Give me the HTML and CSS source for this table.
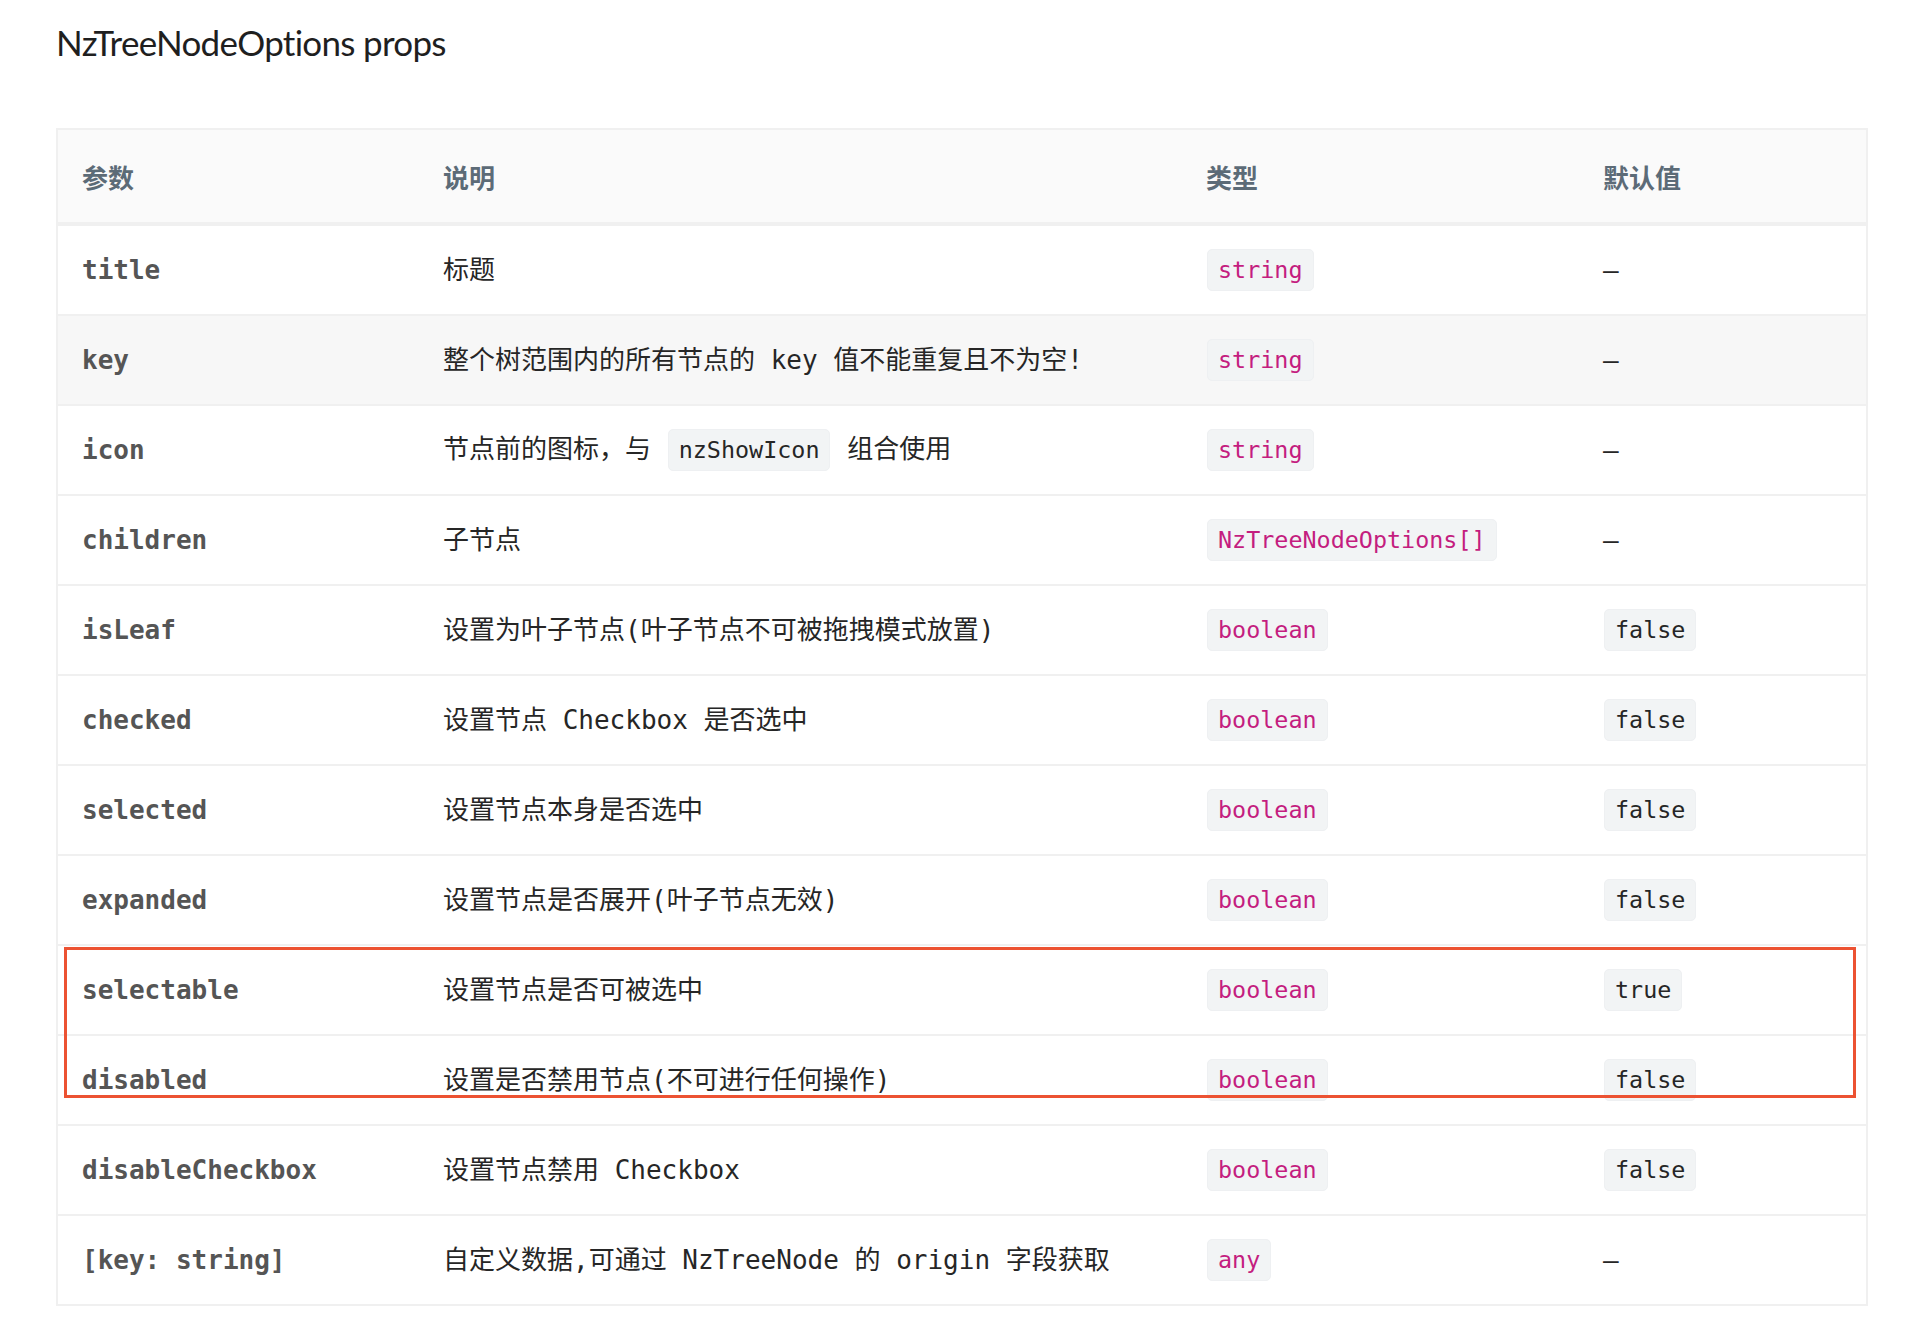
FILE: index.html
```html
<!DOCTYPE html>
<html lang="zh-CN">
<head>
<meta charset="utf-8">
<title>NzTreeNodeOptions props</title>
<link rel="stylesheet" href="styles.css">
</head>
<body>
<main class="page">
  <h3 class="title">NzTreeNodeOptions props</h3>
  <div class="table-wrap">
    <table class="api">
      <colgroup>
        <col class="c1"><col class="c2"><col class="c3"><col class="c4">
      </colgroup>
      <thead>
        <tr><th>参数</th><th>说明</th><th>类型</th><th>默认值</th></tr>
      </thead>
      <tbody>
        <tr><td>title</td><td>标题</td><td><code>string</code></td><td>–</td></tr>
        <tr class="hover"><td>key</td><td>整个树范围内的所有节点的 key 值不能重复且不为空!</td><td><code>string</code></td><td>–</td></tr>
        <tr><td>icon</td><td>节点前的图标，与 <code>nzShowIcon</code> 组合使用</td><td><code>string</code></td><td>–</td></tr>
        <tr><td>children</td><td>子节点</td><td><code>NzTreeNodeOptions[]</code></td><td>–</td></tr>
        <tr><td>isLeaf</td><td>设置为叶子节点(叶子节点不可被拖拽模式放置)</td><td><code>boolean</code></td><td><code>false</code></td></tr>
        <tr><td>checked</td><td>设置节点 Checkbox 是否选中</td><td><code>boolean</code></td><td><code>false</code></td></tr>
        <tr><td>selected</td><td>设置节点本身是否选中</td><td><code>boolean</code></td><td><code>false</code></td></tr>
        <tr><td>expanded</td><td>设置节点是否展开(叶子节点无效)</td><td><code>boolean</code></td><td><code>false</code></td></tr>
        <tr><td>selectable</td><td>设置节点是否可被选中</td><td><code>boolean</code></td><td><code>true</code></td></tr>
        <tr><td>disabled</td><td>设置是否禁用节点(不可进行任何操作)</td><td><code>boolean</code></td><td><code>false</code></td></tr>
        <tr><td>disableCheckbox</td><td>设置节点禁用 Checkbox</td><td><code>boolean</code></td><td><code>false</code></td></tr>
        <tr><td>[key: string]</td><td>自定义数据,可通过 NzTreeNode 的 origin 字段获取</td><td><code>any</code></td><td>–</td></tr>
      </tbody>
    </table>
    <div class="highlight"></div>
  </div>
</main>
</body>
</html>
```

FILE: styles.css
```css
html, body {
  margin: 0;
  padding: 0;
  background: #ffffff;
}

.page {
  padding: 20px 0 0 56px;
  width: 1812px;
}

.title {
  margin: 0;
  font-family: Lato, "Noto Sans", sans-serif;
  font-weight: 400;
  font-size: 35px;
  line-height: 44px;
  letter-spacing: -0.7px;
  color: #1f1f1f;
}

.table-wrap {
  position: relative;
  margin-top: 64px;
}

.api {
  width: 1812px;
  table-layout: fixed;
  border-collapse: separate;
  border-spacing: 0;
  border: 2px solid #f0f0f0;
  font-family: "DejaVu Sans Mono", "Noto Sans CJK SC", monospace;
  font-size: 26px;
  color: #262626;
}

.c1 { width: 361px; }
.c2 { width: 763px; }
.c3 { width: 397px; }
.c4 { width: 287px; }

.api th {
  height: 92px;
  padding: 0 24px;
  background: #fafafa;
  border-bottom: 4px solid #f0f0f0;
  text-align: left;
  vertical-align: middle;
  font-family: "Noto Sans CJK SC", sans-serif;
  font-weight: 700;
  font-size: 26px;
  color: #5c6b77;
}

.api td {
  height: 88px;
  padding: 0 24px;
  vertical-align: middle;
  line-height: 36px;
  white-space: nowrap;
}

.api tbody tr + tr td {
  border-top: 2px solid #f0f0f0;
}

.api tr.hover td {
  background: #f7f7f7;
}

.api td:first-child {
  font-weight: 700;
  color: #555555;
}

.api code {
  display: inline-block;
  margin: 0 1px;
  padding: 5px 10px;
  font-family: "DejaVu Sans Mono", monospace;
  font-size: 23.4px;
  line-height: 30px;
  background: #f2f4f5;
  border: 1px solid #eef0f2;
  border-radius: 5px;
  color: #262626;
  vertical-align: middle;
}

.api td:nth-child(3) code {
  color: #c41d7f;
}

.highlight {
  position: absolute;
  left: 8px;
  top: 819px;
  width: 1792px;
  height: 151px;
  box-sizing: border-box;
  border: 3px solid #ec5232;
  pointer-events: none;
}
```
